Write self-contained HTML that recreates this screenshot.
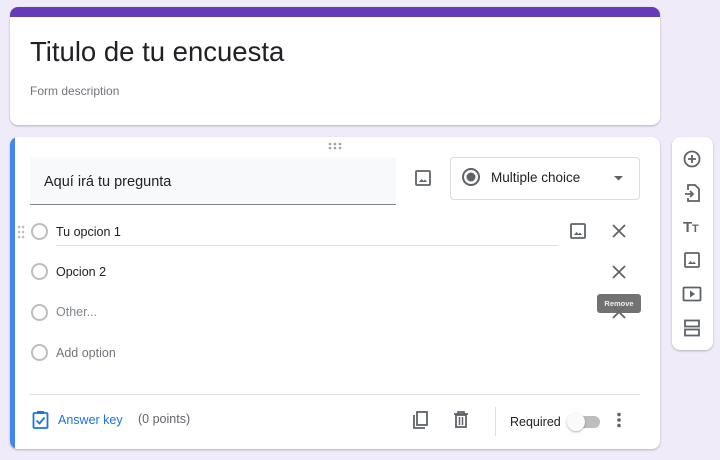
<!DOCTYPE html>
<html><head><meta charset="utf-8"><style>
*{margin:0;padding:0;box-sizing:border-box}
body{width:720px;height:460px;background:#efebf8;font-family:"Liberation Sans",sans-serif;position:relative;overflow:hidden;color:#202124}
.card{position:absolute;background:#fff;border-radius:8px;box-shadow:0 1px 2px rgba(0,0,0,.25)}
.abs{position:absolute}
svg{position:absolute}
.ic{fill:none;stroke:#5f6368;stroke-width:1.8}
.radio{position:absolute;width:17px;height:17px;border:2px solid #bdbdbd;border-radius:50%}
.opt{position:absolute;left:56px;font-size:12.5px;color:#202124}
</style></head><body>
<div class="card" style="left:10px;top:7px;width:650px;height:118px;overflow:hidden">
 <div class="abs" style="left:0;top:0;width:650px;height:10px;background:#673ab7"></div>
 <div class="abs" style="left:20px;top:29px;font-size:27.5px;color:#202124">Titulo de tu encuesta</div>
 <div class="abs" style="left:20px;top:77px;font-size:12px;color:#70757a">Form description</div>
</div>
<div class="card" style="left:10px;top:137px;width:650px;height:312px;overflow:hidden">
 <div class="abs" style="left:0;top:0;width:5px;height:312px;background:#4285f4"></div>
 <svg style="left:318px;top:5px" width="14" height="8"><g fill="#9aa0a6"><circle cx="2" cy="2" r="1.3"/><circle cx="7" cy="2" r="1.3"/><circle cx="12" cy="2" r="1.3"/><circle cx="2" cy="6" r="1.3"/><circle cx="7" cy="6" r="1.3"/><circle cx="12" cy="6" r="1.3"/></g></svg>
 <div class="abs" style="left:20px;top:20px;width:366px;height:48px;background:#f8f9fa;border-bottom:1.5px solid #80868b"></div>
 <div class="abs" style="left:34px;top:37px;font-size:14.5px">Aquí irá tu pregunta</div>
 <div class="abs" style="left:440px;top:20px;width:190px;height:43px;border:1px solid #dadce0;border-radius:4px"></div>
</div>
<svg style="left:414px;top:169px" width="18" height="18" viewBox="0 0 18 18"><rect x="2" y="2" width="14" height="14" rx="1" class="ic"/><path d="M5 13l2.5-3 2 2 1.5-1.5L13 13z" fill="#5f6368"/></svg>
<svg style="left:461px;top:167px" width="20" height="20"><circle cx="10" cy="10" r="8" fill="none" stroke="#5f6368" stroke-width="2"/><circle cx="10" cy="10" r="4.5" fill="#5f6368"/></svg>
<div class="abs" style="left:491px;top:170px;font-size:13.5px">Multiple choice</div>
<svg style="left:613px;top:175px" width="12" height="6"><path d="M1 1h9L5.5 5.5z" fill="#5f6368"/></svg>
<svg style="left:17px;top:225px" width="8" height="14"><g fill="#bdbdbd"><circle cx="2" cy="2" r="1.3"/><circle cx="6" cy="2" r="1.3"/><circle cx="2" cy="7" r="1.3"/><circle cx="6" cy="7" r="1.3"/><circle cx="2" cy="12" r="1.3"/><circle cx="6" cy="12" r="1.3"/></g></svg>
<div class="radio" style="left:31px;top:223px"></div>
<div class="opt" style="top:225px">Tu opcion 1</div>
<div class="abs" style="left:56px;top:245px;width:502px;height:1px;background:#e0e0e0"></div>
<div class="radio" style="left:31px;top:263px"></div>
<div class="opt" style="top:265px">Opcion 2</div>
<div class="radio" style="left:31px;top:304px"></div>
<div class="opt" style="top:305px;color:#80868b">Other...</div>
<div class="radio" style="left:31px;top:344px"></div>
<div class="opt" style="top:346px;color:#70757a">Add option</div>
<svg style="left:569px;top:222px" width="18" height="18" viewBox="0 0 18 18"><rect x="2" y="2" width="14" height="14" rx="1" class="ic"/><path d="M5 13l2.5-3 2 2 1.5-1.5L13 13z" fill="#5f6368"/></svg>
<svg style="left:612px;top:224px" width="14" height="14"><path d="M1 1L13 13M13 1L1 13" stroke="#5f6368" stroke-width="1.8"/></svg>
<svg style="left:612px;top:265px" width="14" height="14"><path d="M1 1L13 13M13 1L1 13" stroke="#5f6368" stroke-width="1.8"/></svg>
<svg style="left:612px;top:305px" width="14" height="14"><path d="M1 1L13 13M13 1L1 13" stroke="#5f6368" stroke-width="1.8"/></svg>
<div class="abs" style="left:597px;top:294px;width:44px;height:19px;background:#6b6b6b;border-radius:3px;color:#eee;font-size:7.5px;font-weight:bold;text-align:center;line-height:19px;opacity:.95">Remove</div>
<div class="abs" style="left:30px;top:394px;width:610px;height:1px;background:#e0e0e0"></div>
<svg style="left:32px;top:410px" width="18" height="20"><rect x="1.5" y="3" width="14" height="15" rx="1" fill="none" stroke="#1a73e8" stroke-width="1.8"/><rect x="5" y="1" width="7" height="3" fill="#1a73e8"/><path d="M4.5 10.5l3 3 5-6" fill="none" stroke="#1a73e8" stroke-width="1.8"/></svg>
<div class="abs" style="left:58px;top:413px;font-size:12.5px;color:#1a73e8">Answer key</div>
<div class="abs" style="left:138px;top:412px;font-size:12.5px;color:#5f6368">(0 points)</div>
<svg style="left:410px;top:410px" width="20" height="20"><path d="M4 5v13h11" fill="none" stroke="#5f6368" stroke-width="1.8"/><rect x="7" y="2" width="10" height="13" fill="none" stroke="#5f6368" stroke-width="1.8"/></svg>
<svg style="left:452px;top:410px" width="18" height="20"><path d="M2 4h14M6 4V2h6v2" fill="none" stroke="#5f6368" stroke-width="1.8"/><rect x="4" y="5" width="10" height="12" fill="none" stroke="#5f6368" stroke-width="1.8"/><path d="M7.5 7v8M10.5 7v8" stroke="#5f6368" stroke-width="1.5"/></svg>
<div class="abs" style="left:495px;top:407px;width:1px;height:29px;background:#e0e0e0"></div>
<div class="abs" style="left:510px;top:415px;font-size:12.5px;color:#202124">Required</div>
<div class="abs" style="left:570px;top:416px;width:30px;height:12px;border-radius:6px;background:#bdbdbd"></div>
<div class="abs" style="left:567px;top:413px;width:18px;height:18px;border-radius:50%;background:#fafafa;box-shadow:0 1px 2px rgba(0,0,0,.3)"></div>
<svg style="left:616px;top:412px" width="6" height="16"><g fill="#5f6368"><circle cx="3" cy="2.5" r="1.8"/><circle cx="3" cy="8" r="1.8"/><circle cx="3" cy="13.5" r="1.8"/></g></svg>
<div class="card" style="left:672px;top:137px;width:41px;height:213px"></div>
<svg style="left:683px;top:150px" width="18" height="18"><circle cx="9" cy="9" r="7.5" class="ic"/><path d="M9 5v8M5 9h8" class="ic"/></svg>
<svg style="left:683px;top:183px" width="18" height="20"><path d="M5 7V2h7l4 4v12H5v-3" class="ic"/><path d="M2 11h8M7 8l3 3-3 3" class="ic"/></svg>
<svg style="left:683px;top:218px" width="20" height="16"><text x="0" y="14" font-family="Liberation Sans" font-weight="bold" font-size="15" fill="#5f6368">T</text><text x="9" y="14" font-family="Liberation Sans" font-weight="bold" font-size="11" fill="#5f6368">T</text></svg>
<svg style="left:683px;top:251px" width="18" height="18"><rect x="2" y="2" width="14" height="14" rx="1" class="ic"/><path d="M5 13l2.5-3 2 2 1.5-1.5L13 13z" fill="#5f6368"/></svg>
<svg style="left:682px;top:285px" width="20" height="18"><rect x="1.5" y="2.5" width="17" height="13" rx="1" class="ic"/><path d="M8 5.5v7l5-3.5z" fill="#5f6368"/></svg>
<svg style="left:683px;top:319px" width="18" height="18"><rect x="2" y="1.5" width="14" height="6" class="ic"/><rect x="2" y="10.5" width="14" height="6" class="ic"/></svg>
</body></html>
